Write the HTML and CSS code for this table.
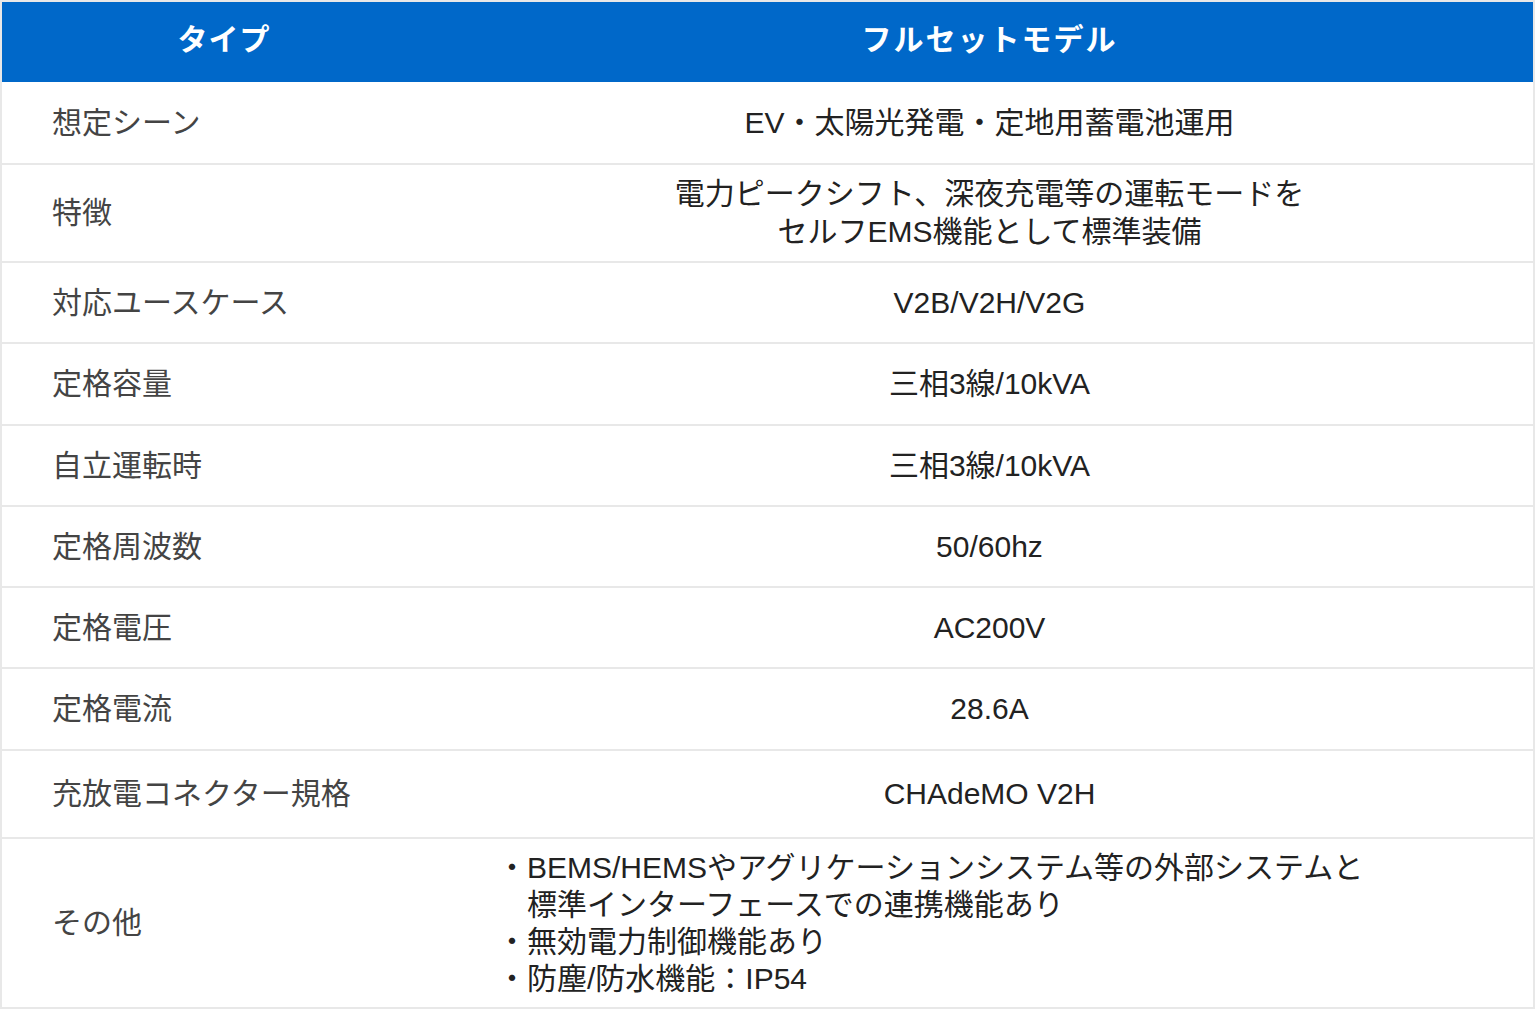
FILE: index.html
```html
<!DOCTYPE html>
<html lang="ja">
<head>
<meta charset="utf-8">
<title>スペック表</title>
<link rel="stylesheet" href="styles.css">
</head>
<body>
<table class="spec">
  <thead>
    <tr class="head">
      <th class="c1">タイプ</th>
      <th class="c2 model">フルセットモデル</th>
    </tr>
  </thead>
  <tbody>
    <tr class="r81"><td class="label">想定シーン</td><td class="val">EV・太陽光発電・定地用蓄電池運用</td></tr>
    <tr class="r96"><td class="label">特徴</td><td class="val">電力ピークシフト、深夜充電等の運転モードを<br>セルフEMS機能として標準装備</td></tr>
    <tr class="r79"><td class="label">対応ユースケース</td><td class="val">V2B/V2H/V2G</td></tr>
    <tr class="r80"><td class="label">定格容量</td><td class="val">三相3線/10kVA</td></tr>
    <tr class="r79"><td class="label">自立運転時</td><td class="val">三相3線/10kVA</td></tr>
    <tr class="r79"><td class="label">定格周波数</td><td class="val">50/60hz</td></tr>
    <tr class="r79"><td class="label">定格電圧</td><td class="val">AC200V</td></tr>
    <tr class="r80"><td class="label">定格電流</td><td class="val">28.6A</td></tr>
    <tr class="r86"><td class="label">充放電コネクター規格</td><td class="val">CHAdeMO V2H</td></tr>
    <tr class="r168"><td class="label">その他</td><td class="val list-cell">
      <ul class="notes">
        <li>BEMS/HEMSやアグリケーションシステム等の外部システムと<br>標準インターフェースでの連携機能あり</li>
        <li>無効電力制御機能あり</li>
        <li>防塵/防水機能：IP54</li>
      </ul>
    </td></tr>
  </tbody>
</table>
</body>
</html>
```
FILE: styles.css
```css
html, body {
  margin: 0;
  padding: 0;
  background: #ffffff;
}
body {
  font-family: "Liberation Sans", "Noto Sans CJK JP", sans-serif;
  color: #333333;
}
.spec {
  width: 1535px;
  border-collapse: collapse;
  border: 2px solid #e8e8e8;
  table-layout: fixed;
}
.c1 { width: 444px; }
.head th {
  background: #0068c9;
  color: #ffffff;
  height: 76px;
  padding: 0 0 4px 0;
  font-size: 30px;
  line-height: 34px;
  font-weight: bold;
  letter-spacing: 1px;
  text-align: center;
  vertical-align: middle;
}
.head .model { letter-spacing: 2px; }
.spec td {
  border-bottom: 2px solid #e8e8e8;
  padding: 0;
  font-size: 30px;
  line-height: 38px;
  vertical-align: middle;
}
.r79 td { height: 79px; }
.r80 td { height: 80px; }
.r81 td { height: 81px; }
.r96 td { height: 96px; }
.r86 td { height: 86px; }
.r168 td { height: 168px; }
.label {
  padding-left: 50px !important;
  color: #444444;
  text-align: left;
}
.val {
  text-align: center;
  color: #222222;
}
.list-cell { text-align: left; }
.notes {
  list-style: none;
  margin: 0 0 0 55px;
  padding: 0;
  line-height: 37px;
}
.notes li {
  position: relative;
  padding-left: 26px;
}
.notes li::before {
  content: "・";
  position: absolute;
  left: -4px;
  top: 0;
  width: 26px;
}
```
